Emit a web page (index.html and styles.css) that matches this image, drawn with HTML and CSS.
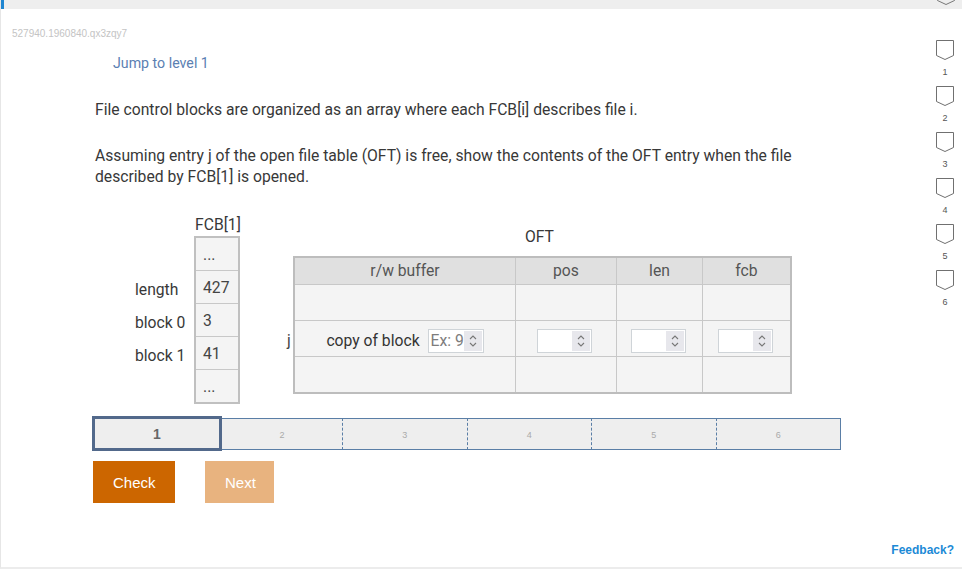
FILE: index.html
```html
<!DOCTYPE html>
<html>
<head>
<meta charset="utf-8">
<link rel="stylesheet" href="styles.css">
</head>
<body>
<div class="page">
  <div class="topbar">
    <span class="accent"></span>
    <span class="spacer"></span>
    <svg class="top-chev" width="20" height="9" viewBox="0 0 20 9"><path d="M1.5 0 V0.5 L10 4.5 L18.5 0.5 V0" fill="none" stroke="#777" stroke-width="1"/></svg>
  </div>
  <div class="main">
    <div class="content">
      <div class="meta">527940.1960840.qx3zqy7</div>
      <div class="jump">Jump to level 1</div>
      <div class="question">
        <p class="p1">File control blocks are organized as an array where each FCB[i] describes file i.</p>
        <p class="p2">Assuming entry j of the open file table (OFT) is free, show the contents of the OFT entry when the file described by FCB[1] is opened.</p>
        <div class="diagram">
          <div class="fcb-labels">
            <div class="lbl">length</div>
            <div class="lbl">block 0</div>
            <div class="lbl">block 1</div>
          </div>
          <div class="fcb">
            <div class="fcb-title">FCB[1]</div>
            <div class="fcb-col">
              <div class="fcb-cell">...</div>
              <div class="fcb-cell">427</div>
              <div class="fcb-cell">3</div>
              <div class="fcb-cell">41</div>
              <div class="fcb-cell">...</div>
            </div>
          </div>
          <div class="oft-section">
            <div class="jcol">j</div>
            <div class="oft-wrap">
              <div class="oft-title">OFT</div>
              <div class="oft">
                <div class="hd">r/w buffer</div>
                <div class="hd">pos</div>
                <div class="hd">len</div>
                <div class="hd">fcb</div>
                <div class="cell"></div><div class="cell"></div><div class="cell"></div><div class="cell"></div>
                <div class="cell"><span class="copy">copy of block</span><span class="num wide"><input class="num-in" placeholder="Ex: 9"><span class="spin"><svg width="10" height="14" viewBox="0 0 10 14"><path d="M2 5 L5 2 L8 5 M2 9 L5 12 L8 9" fill="none" stroke="#777" stroke-width="1.1"/></svg></span></span></div>
                <div class="cell"><span class="num"><input class="num-in"><span class="spin"><svg width="10" height="14" viewBox="0 0 10 14"><path d="M2 5 L5 2 L8 5 M2 9 L5 12 L8 9" fill="none" stroke="#777" stroke-width="1.1"/></svg></span></span></div>
                <div class="cell"><span class="num"><input class="num-in"><span class="spin"><svg width="10" height="14" viewBox="0 0 10 14"><path d="M2 5 L5 2 L8 5 M2 9 L5 12 L8 9" fill="none" stroke="#777" stroke-width="1.1"/></svg></span></span></div>
                <div class="cell"><span class="num"><input class="num-in"><span class="spin"><svg width="10" height="14" viewBox="0 0 10 14"><path d="M2 5 L5 2 L8 5 M2 9 L5 12 L8 9" fill="none" stroke="#777" stroke-width="1.1"/></svg></span></span></div>
                <div class="cell"></div><div class="cell"></div><div class="cell"></div><div class="cell"></div>
              </div>
            </div>
          </div>
        </div>
        <div class="progress">
          <div class="seg current">1</div>
          <div class="seg second">2</div>
          <div class="seg dashed">3</div>
          <div class="seg dashed">4</div>
          <div class="seg dashed">5</div>
          <div class="seg dashed last">6</div>
        </div>
        <div class="buttons">
          <button class="btn check">Check</button>
          <button class="btn next">Next</button>
        </div>
      </div>
    </div>
    <div class="sidebar">
      <div class="lvl"><svg width="20" height="22" viewBox="0 0 20 22"><path d="M1.5 1.5 H18.5 V16.5 L10 20.5 L1.5 16.5 Z" fill="#fff" stroke="#707070" stroke-width="1"/></svg><span class="lvl-num">1</span></div>
      <div class="lvl"><svg width="20" height="22" viewBox="0 0 20 22"><path d="M1.5 1.5 H18.5 V16.5 L10 20.5 L1.5 16.5 Z" fill="#fff" stroke="#707070" stroke-width="1"/></svg><span class="lvl-num">2</span></div>
      <div class="lvl"><svg width="20" height="22" viewBox="0 0 20 22"><path d="M1.5 1.5 H18.5 V16.5 L10 20.5 L1.5 16.5 Z" fill="#fff" stroke="#707070" stroke-width="1"/></svg><span class="lvl-num">3</span></div>
      <div class="lvl"><svg width="20" height="22" viewBox="0 0 20 22"><path d="M1.5 1.5 H18.5 V16.5 L10 20.5 L1.5 16.5 Z" fill="#fff" stroke="#707070" stroke-width="1"/></svg><span class="lvl-num">4</span></div>
      <div class="lvl"><svg width="20" height="22" viewBox="0 0 20 22"><path d="M1.5 1.5 H18.5 V16.5 L10 20.5 L1.5 16.5 Z" fill="#fff" stroke="#707070" stroke-width="1"/></svg><span class="lvl-num">5</span></div>
      <div class="lvl"><svg width="20" height="22" viewBox="0 0 20 22"><path d="M1.5 1.5 H18.5 V16.5 L10 20.5 L1.5 16.5 Z" fill="#fff" stroke="#707070" stroke-width="1"/></svg><span class="lvl-num">6</span></div>
    </div>
  </div>
  <div class="footer"><span class="feedback">Feedback?</span></div>
</div>
</body>
</html>
```
FILE: styles.css
```css
* { box-sizing: border-box; }
html, body { margin: 0; padding: 0; background: #fff; }
body { font-family: Roboto, "Liberation Sans", sans-serif; color: #333; }

.page {
  width: 962px;
  height: 569px;
  display: flex;
  flex-direction: column;
  border-left: 1px solid #e6e6e6;
  border-bottom: 2px solid #ececec;
  overflow: hidden;
}

.topbar {
  height: 9px;
  flex: 0 0 9px;
  background: #eeeeee;
  display: flex;
  align-items: stretch;
}
.accent { width: 3px; background: #1f86d1; }
.spacer { flex: 1; }
.top-chev { display: block; margin-right: 6px; }

.main { flex: 1; display: flex; min-height: 0; }
.content { flex: 1; }

.meta {
  margin: 19px 0 0 11px;
  font-family: "Liberation Sans", sans-serif;
  font-size: 10px;
  line-height: 11px;
  color: #c4c4c4;
}
.jump {
  margin: 14px 0 0 112px;
  font-size: 14.2px;
  line-height: 20px;
  color: #5b80b2;
}

.question { padding-left: 94px; }
.question p {
  margin: 0;
  font-size: 15.7px;
  line-height: 21px;
  color: #383838;
}
.p1 { margin-top: 26px !important; }
.p2 { margin-top: 25px !important; width: 740px; }

.diagram {
  display: flex;
  align-items: flex-start;
  margin-top: 27px;
  margin-left: 40px;
}
.fcb-labels { width: 59px; padding-top: 59px; }
.lbl { height: 33px; line-height: 33px; font-size: 15.7px; color: #383838; }

.fcb { width: 46px; }
.fcb-title { text-align: center; font-size: 15.7px; line-height: 22px; color: #383838; white-space: nowrap; margin-left: 1px; }
.fcb-col { border: 2px solid #c0c0c0; background: #f4f4f4; }
.fcb-cell {
  height: 33px;
  line-height: 33px;
  padding-left: 7px;
  font-size: 15.7px;
  color: #444;
  border-bottom: 1px solid #c8c8c8;
}
.fcb-cell:last-child { border-bottom: none; height: 32px; }

.oft-section { display: flex; margin-left: 47px; }
.jcol {
  width: 6px;
  padding-top: 109px;
  line-height: 35px;
  font-size: 15.7px;
  color: #444;
}
.oft-wrap { display: flex; flex-direction: column; }
.oft-title {
  margin-top: 12px;
  height: 22px;
  line-height: 22px;
  text-align: center;
  padding-right: 6px;
  font-size: 15.7px;
  color: #383838;
}
.oft {
  margin-top: 8px;
  display: grid;
  grid-template-columns: 220px 100px 85px 87px;
  grid-template-rows: 26px 35px 35px 35px;
  gap: 1px;
  background: #c8c8c8;
  border: 2px solid #bdbdbd;
}
.hd {
  background: #e0e0e0;
  text-align: center;
  line-height: 26px;
  font-size: 15.7px;
  color: #555;
}
.cell {
  background: #f4f4f4;
  display: flex;
  align-items: center;
  justify-content: center;
  padding-top: 4px;
}
.copy { font-size: 15.7px; color: #333; margin-right: 8px; }

.num {
  display: inline-flex;
  align-items: center;
  width: 55px;
  height: 24px;
  background: #fff;
  border: 1px solid #cfd4d8;
  position: relative;
  margin-left: -3px;
  overflow: hidden;
}
.num.wide { width: 56px; margin-left: 0; }
.num-in {
  width: 50px;
  border: none;
  outline: none;
  padding: 0 0 0 2px;
  font-family: Roboto, sans-serif;
  font-size: 15.7px;
  background: transparent;
  color: #333;
}
.num-in::placeholder { color: #7d7d7d; }
.spin {
  position: absolute;
  right: 1px;
  top: 1px;
  width: 18px;
  height: 20px;
  background: #e7e7ec;
  display: flex;
  align-items: center;
  justify-content: center;
}
.spin svg { display: block; }

.progress {
  display: flex;
  align-items: center;
  width: 749px;
  margin-left: -3px;
  margin-top: 12px;
  height: 35px;
}
.seg {
  height: 32px;
  background: #eeeeee;
  border-top: 1px solid #5a7ea6;
  border-bottom: 1px solid #5a7ea6;
  font-family: "Liberation Sans", sans-serif;
  font-size: 9px;
  color: #aaa;
  display: flex;
  align-items: center;
  justify-content: center;
  padding-top: 2px;
}
.seg.current {
  flex: 0 0 130px;
  height: 35px;
  border: 3px solid #52698b;
  font-size: 14px;
  font-weight: bold;
  color: #666;
  padding-top: 0;
}
.seg.second { flex: 0 0 120px; }
.seg.dashed { flex: 1; border-left: 1px dashed #5a7ea6; }
.seg.last { border-right: 1px solid #5a7ea6; }

.buttons { display: flex; gap: 30px; margin-top: 10px; margin-left: -2px; }
.btn {
  height: 42px;
  border: none;
  padding: 0 20px;
  font-family: "Liberation Sans", sans-serif;
  font-size: 15px;
  color: #fff;
}
.check { background: #cc6600; width: 82px; }
.next { background: #e8b37f; width: 69px; }

.sidebar {
  width: 32px;
  display: flex;
  flex-direction: column;
  align-items: center;
  padding-top: 30px;
  padding-right: 2px;
}
.lvl {
  height: 46px;
  display: flex;
  flex-direction: column;
  align-items: center;
}
.lvl svg { display: block; }
.lvl-num {
  font-family: "Liberation Sans", sans-serif;
  font-size: 9px;
  line-height: 14px;
  margin-top: 4px;
  color: #555;
}

.footer {
  display: flex;
  justify-content: flex-end;
  padding: 0 8px 9px 0;
}
.feedback {
  font-family: "Liberation Sans", sans-serif;
  font-weight: bold;
  font-size: 12px;
  line-height: 16px;
  color: #1c8ad6;
}
```
